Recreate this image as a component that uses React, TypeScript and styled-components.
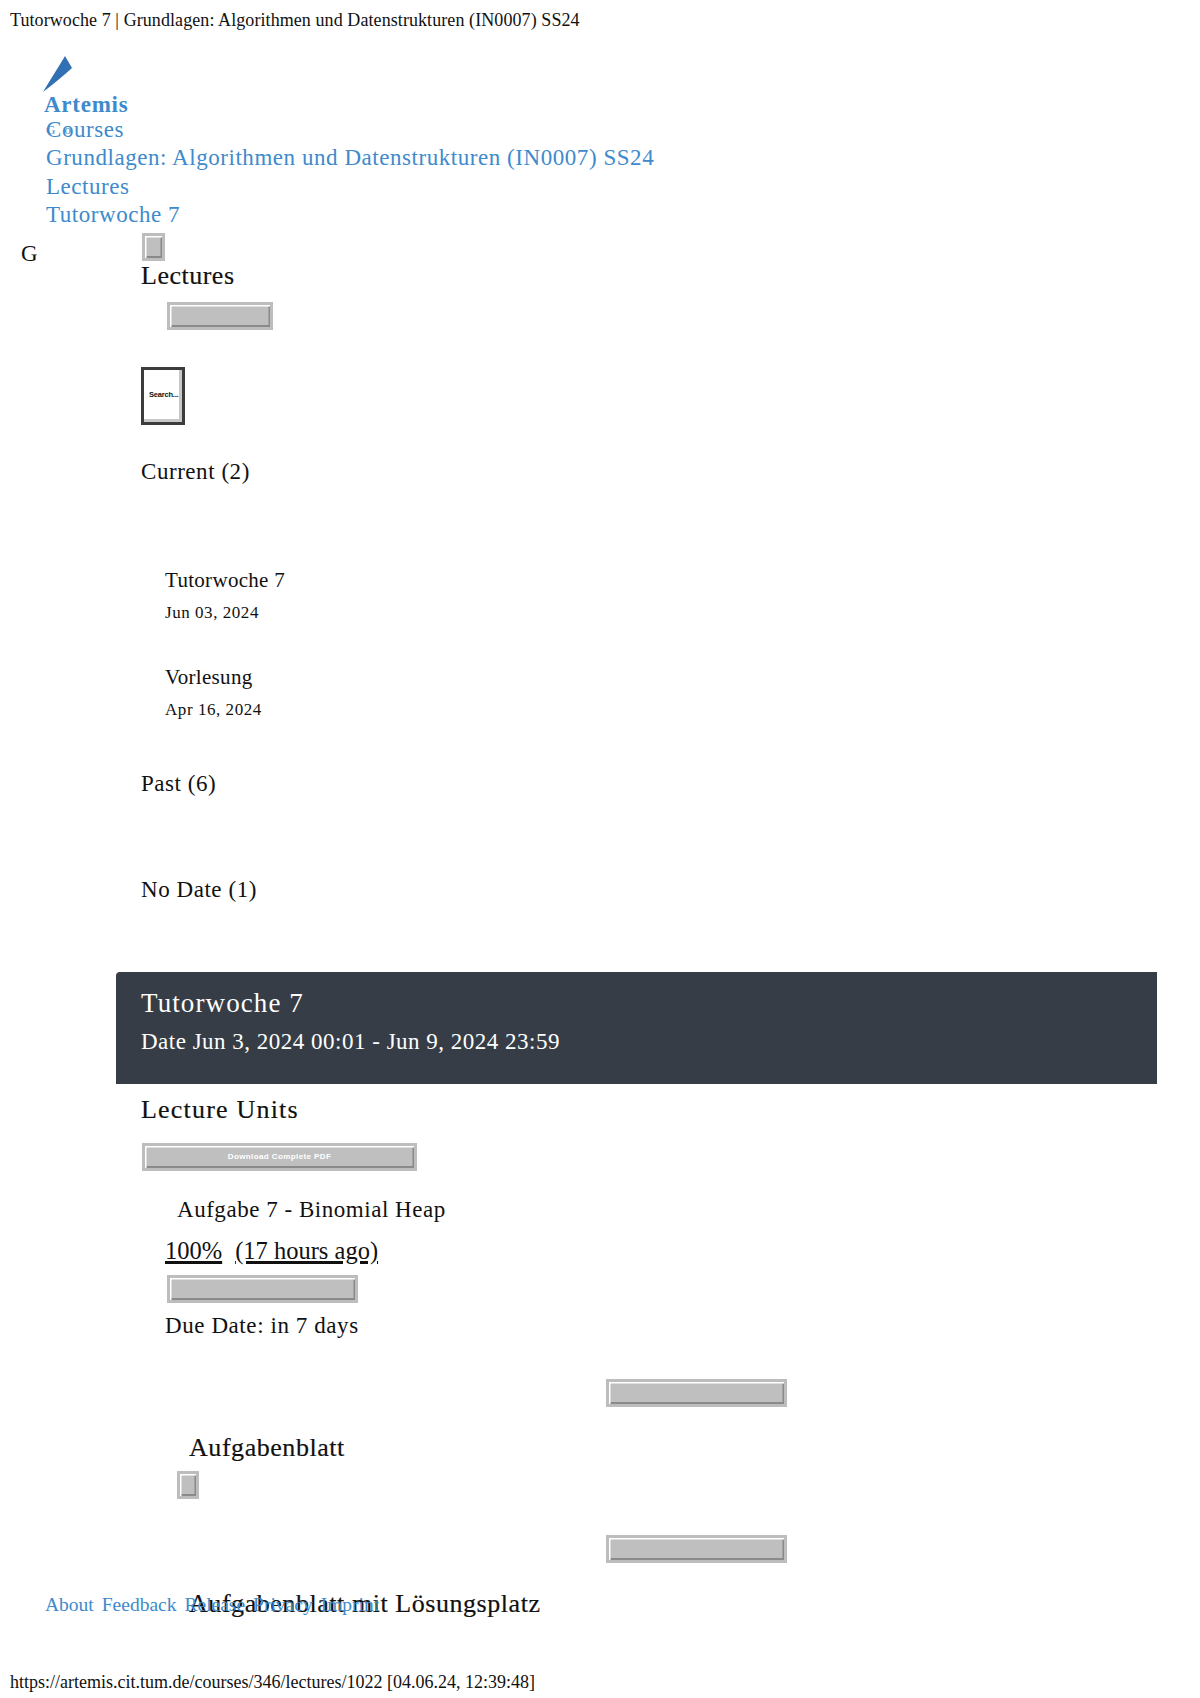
import React from 'react'
import styled, { createGlobalStyle } from 'styled-components'

const GlobalStyle = createGlobalStyle`
  html, body {
    margin: 0;
    padding: 0;
    background: #fff;
    color: #111;
    font-family: "Liberation Serif", "Times New Roman", serif;
  }
`

const Page = styled.div`
  position: relative;
  width: 1200px;
  height: 1698px;
  overflow: hidden;
`

const PrintLine = styled.div<{ $top?: number }>`
  margin: ${({ $top }) => $top ?? 0}px 0 0 10px;
  font-size: 18px;
  line-height: 20px;
  letter-spacing: 0.08px;
  white-space: nowrap;
`

const Nav = styled.nav`
  position: relative;
  margin: 26px 0 0 45px;
  color: #3e8acc;
`

const LogoMark = styled.svg`
  display: block;
  margin-left: -2px;
`

const Brand = styled.div`
  margin: -1px 0 0 -1px;
  font-size: 23px;
  font-weight: 700;
  line-height: 24px;
  letter-spacing: 0.75px;
`

const GoLabel = styled.span`
  position: absolute;
  left: 1px;
  top: 66px;
  font-size: 13px;
  line-height: 16px;
  letter-spacing: 9px;
`

const Crumbs = styled.ol`
  list-style: none;
  margin: -1.5px 0 0;
  padding: 0 0 0 1px;
`

const Crumb = styled.li`
  font-size: 23px;
  line-height: 28.6px;
  letter-spacing: 0.55px;
  white-space: nowrap;
`

const Body = styled.div`
  display: grid;
  grid-template-columns: 116px 1fr 43px;
  margin-top: 3px;
`

const Gutter = styled.div`
  padding: 8px 0 0 21px;
  font-size: 23px;
  line-height: 26px;
`

const Sidebar = styled.aside`
  padding-left: 25px;
`

const Bevel = styled.button<{ $width: number; $shift?: number }>`
  display: block;
  box-sizing: border-box;
  width: ${({ $width }) => $width}px;
  height: 28px;
  margin: 0 0 0 ${({ $shift }) => $shift ?? 0}px;
  padding: 0;
  border: 3px solid #bdbdbd;
  background: #bfbfbf;
  box-shadow: inset 1.5px 1.5px 0 #fff, inset -1.5px -2px 0 #8a8a8a;
  color: #fff;
  font-family: "Liberation Sans", Arial, sans-serif;
  font-size: 8px;
  font-weight: 700;
  letter-spacing: 0.4px;
`

const Title = styled.h2`
  margin: 0;
  font-size: 26px;
  font-weight: 400;
  line-height: 30px;
  letter-spacing: 0.5px;
  -webkit-text-stroke: 0.2px #111;
`

const SearchBox = styled.div`
  display: flex;
  align-items: center;
  box-sizing: border-box;
  width: 44px;
  height: 58px;
  margin-top: 37px;
  padding: 0 0 3px 5px;
  border: 3px solid #3a3d3a;
  box-shadow: inset -3px -3px 0 #c8c8c8;
  font-family: "Liberation Sans", Arial, sans-serif;
  font-size: 7.5px;
  font-weight: 700;
  letter-spacing: -0.2px;
  white-space: nowrap;
`

const GroupLabel = styled.div<{ $top: number }>`
  margin-top: ${({ $top }) => $top}px;
  font-size: 23px;
  line-height: 28px;
  letter-spacing: 0.55px;
`

const LectureItem = styled.div<{ $top: number }>`
  margin: ${({ $top }) => $top}px 0 0 24px;
`

const LectureName = styled.div`
  font-size: 21px;
  line-height: 24px;
  letter-spacing: 0.3px;
`

const LectureDate = styled.div`
  margin-top: 11px;
  font-size: 17px;
  line-height: 20px;
  letter-spacing: 0.55px;
`

const Detail = styled.main`
  margin-top: 68px;
`

const Banner = styled.header`
  box-sizing: border-box;
  height: 112px;
  padding: 15px 25px;
  background: #363d46;
  border-top-left-radius: 4px;
  color: #fff;
`

const BannerTitle = styled.div`
  font-size: 27px;
  line-height: 32px;
  letter-spacing: 1.1px;
`

const BannerDate = styled.div`
  margin-top: 9px;
  font-size: 23px;
  line-height: 28px;
  letter-spacing: 0.5px;
`

const Units = styled.section`
  padding-left: 25px;
`

const UnitsTitle = styled(Title)`
  margin-top: 11px;
  letter-spacing: 1.2px;
`

const DownloadRow = styled.div`
  margin: 18px 0 0 1px;
`

const ExerciseName = styled.div`
  margin: 25px 0 0 36px;
  font-size: 23px;
  line-height: 28px;
  letter-spacing: 0.53px;
`

const Exercise = styled.div`
  margin-left: 24px;
`

const Score = styled.div`
  display: flex;
  gap: 13px;
  margin-top: 13px;
  font-size: 24.5px;
  line-height: 28px;
`

const ScoreLink = styled.span`
  text-decoration: underline;
  text-decoration-thickness: 2.5px;
`

const ButtonRow = styled.div<{ $top: number; $left: number }>`
  margin: ${({ $top }) => $top}px 0 0 ${({ $left }) => $left}px;
`

const DueDate = styled.div`
  margin-top: 9px;
  font-size: 23px;
  line-height: 28px;
  letter-spacing: 0.58px;
`

const SheetTitle = styled.h3<{ $top: number }>`
  margin: ${({ $top }) => $top}px 0 0 48px;
  font-size: 26px;
  font-weight: 400;
  line-height: 30px;
  letter-spacing: 0.55px;
  -webkit-text-stroke: 0.2px #111;
`

const FooterLinks = styled.div`
  position: absolute;
  left: 45px;
  top: 1593px;
  display: flex;
  gap: 8px;
  color: #3e8acc;
  font-size: 19.5px;
  line-height: 24px;
`

const PrintFooter = styled(PrintLine)`
  position: absolute;
  left: 0;
  top: 1672px;
  margin-top: 0;
  letter-spacing: 0;
`

const ArtemisLogo = () => (
  <LogoMark width="30" height="38" viewBox="0 0 30 38">
    <path d="M0 36 C7 24 15 12 22 0 L29 12 C20 20 9 29 0 36 Z" fill="#3070b3" />
  </LogoMark>
)

const crumbs = ['Courses', 'Grundlagen: Algorithmen und Datenstrukturen (IN0007) SS24', 'Lectures', 'Tutorwoche 7']
const footerLinks = ['About', 'Feedback', 'Release', 'Privacy', 'Imprint']

export default function App() {
  return (
    <Page>
      <GlobalStyle />
      <PrintLine $top={10}>Tutorwoche 7 | Grundlagen: Algorithmen und Datenstrukturen (IN0007) SS24</PrintLine>
      <Nav>
        <ArtemisLogo />
        <Brand>Artemis</Brand>
        <GoLabel>Go</GoLabel>
        <Crumbs>
          {crumbs.map((crumb) => (
            <Crumb key={crumb}>{crumb}</Crumb>
          ))}
        </Crumbs>
      </Nav>
      <Body>
        <Gutter>G</Gutter>
        <div>
          <Sidebar>
            <Bevel $width={23} $shift={1} />
            <Title>Lectures</Title>
            <ButtonRow $top={11} $left={26}>
              <Bevel $width={106} />
            </ButtonRow>
            <SearchBox>Search...</SearchBox>
            <GroupLabel $top={33}>Current (2)</GroupLabel>
            <LectureItem $top={82}>
              <LectureName>Tutorwoche 7</LectureName>
              <LectureDate>Jun 03, 2024</LectureDate>
            </LectureItem>
            <LectureItem $top={42}>
              <LectureName>Vorlesung</LectureName>
              <LectureDate>Apr 16, 2024</LectureDate>
            </LectureItem>
            <GroupLabel $top={50}>Past (6)</GroupLabel>
            <GroupLabel $top={78}>No Date (1)</GroupLabel>
          </Sidebar>
          <Detail>
            <Banner>
              <BannerTitle>Tutorwoche 7</BannerTitle>
              <BannerDate>Date Jun 3, 2024 00:01 - Jun 9, 2024 23:59</BannerDate>
            </Banner>
            <Units>
              <UnitsTitle>Lecture Units</UnitsTitle>
              <DownloadRow>
                <Bevel $width={275}>Download Complete PDF</Bevel>
              </DownloadRow>
              <ExerciseName>Aufgabe 7 - Binomial Heap</ExerciseName>
              <Exercise>
                <Score>
                  <ScoreLink>100%</ScoreLink>
                  <ScoreLink>(17 hours ago)</ScoreLink>
                </Score>
                <ButtonRow $top={10} $left={2}>
                  <Bevel $width={191} />
                </ButtonRow>
                <DueDate>Due Date: in 7 days</DueDate>
              </Exercise>
              <ButtonRow $top={39} $left={465}>
                <Bevel $width={181} />
              </ButtonRow>
              <SheetTitle $top={26}>Aufgabenblatt</SheetTitle>
              <ButtonRow $top={8} $left={36}>
                <Bevel $width={22} />
              </ButtonRow>
              <ButtonRow $top={36} $left={465}>
                <Bevel $width={181} />
              </ButtonRow>
              <SheetTitle $top={26}>Aufgabenblatt mit Lösungsplatz</SheetTitle>
            </Units>
          </Detail>
        </div>
      </Body>
      <FooterLinks>
        {footerLinks.map((link) => (
          <span key={link}>{link}</span>
        ))}
      </FooterLinks>
      <PrintFooter>https://artemis.cit.tum.de/courses/346/lectures/1022 [04.06.24, 12:39:48]</PrintFooter>
    </Page>
  )
}
